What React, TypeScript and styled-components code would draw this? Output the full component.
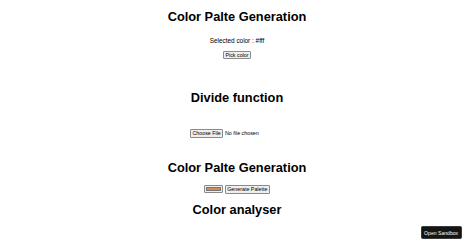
import React from "react";
import styled, { createGlobalStyle } from "styled-components";

const GlobalStyle = createGlobalStyle`
  html, body {
    margin: 0;
    padding: 0;
    background: #ffffff;
  }
  body {
    font-family: "Liberation Sans", Arial, sans-serif;
    color: #000000;
  }
`;

const Page = styled.main`
  display: flex;
  flex-direction: column;
  align-items: center;
  padding-top: 8.5px;
  text-align: center;
`;

const Title = styled.h1<{ $mt: number }>`
  margin: ${(p) => p.$mt}px 0 0;
  font-size: 12.8px;
  line-height: 15px;
  font-weight: bold;
  color: #000;
`;

const Text = styled.p<{ $mt: number }>`
  margin: ${(p) => p.$mt}px 0 0;
  font-size: 6.4px;
  line-height: 8px;
  color: #000;
`;

const Row = styled.div<{ $mt: number }>`
  display: flex;
  align-items: center;
  justify-content: center;
  gap: 1.6px;
  margin-top: ${(p) => p.$mt}px;
`;

const Button = styled.button`
  font-family: "Liberation Sans", Arial, sans-serif;
  font-size: 5.33px;
  line-height: 6.2px;
  padding: 0.4px 1.6px;
  border: 0.6px solid #8a8a8a;
  border-radius: 1px;
  background: #efefef;
  color: #000;
`;

const FileInput = styled.input`
  font-family: "Liberation Sans", Arial, sans-serif;
  font-size: 5.33px;
  line-height: 6.2px;
  color: #000;
  width: 94px;

  &::file-selector-button {
    font-family: "Liberation Sans", Arial, sans-serif;
    font-size: 5.33px;
    line-height: 6.2px;
    padding: 0.4px 1.4px;
    margin-right: 1.8px;
    border: 0.6px solid #8a8a8a;
    border-radius: 1px;
    background: #efefef;
    color: #000;
  }
`;

const ColorInput = styled.input`
  width: 19px;
  height: 8px;
  padding: 0;
  margin: 0;
  border: 0.6px solid #8a8a8a;
  border-radius: 1px;
  background: #efefef;

  &::-webkit-color-swatch-wrapper {
    padding: 1px 1.4px;
  }
  &::-webkit-color-swatch {
    border: 0.4px solid #777;
    border-radius: 0;
  }
`;

const SandboxButton = styled.a`
  position: fixed;
  right: 12.3px;
  bottom: 9px;
  background: #151515;
  color: #ffffff;
  font-family: "Liberation Sans", Arial, sans-serif;
  font-size: 5.1px;
  line-height: 6px;
  padding: 2.3px 2.6px;
  border-radius: 1.6px;
  border: 0.5px solid #3a3a3a;
  text-decoration: none;
`;

export default function App() {
  return (
    <>
      <GlobalStyle />
      <Page>
        <Title $mt={0}>Color Palte Generation</Title>
        <Text $mt={13.5}>Selected color : #fff</Text>
        <Row $mt={5.5}>
          <Button>Pick color</Button>
        </Row>

        <Title $mt={31}>Divide function</Title>
        <Row $mt={23.5}>
          <FileInput type="file" />
        </Row>

        <Title $mt={22}>Color Palte Generation</Title>
        <Row $mt={10}>
          <ColorInput type="color" defaultValue="#d48a5b" />
          <Button>Generate Palette</Button>
        </Row>

        <Title $mt={8.5}>Color analyser</Title>
      </Page>
      <SandboxButton href="#">Open Sandbox</SandboxButton>
    </>
  );
}
